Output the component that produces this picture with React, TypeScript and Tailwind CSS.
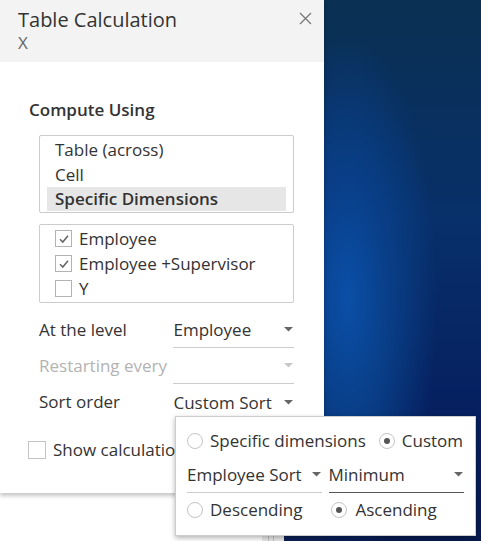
import React from "react";

const font = { fontFamily: "'Open Sans', 'Noto Sans', sans-serif" };

function Caret({ light = false }: { light?: boolean }) {
  return (
    <svg width="9" height="5" viewBox="0 0 9 5" className="shrink-0">
      <path d="M0 0 L9 0 L4.5 4.5 Z" fill={light ? "#c8c8c8" : "#666"} />
    </svg>
  );
}

function Check({ checked }: { checked: boolean }) {
  return (
    <span className="flex h-[17px] w-[17px] shrink-0 items-center justify-center border border-[#b3b3b3] bg-white">
      {checked && (
        <svg width="12" height="10" viewBox="0 0 12 10">
          <path d="M2 5.2 L4.8 8 L10 1.8" fill="none" stroke="#666" strokeWidth="1.6" />
        </svg>
      )}
    </span>
  );
}

function Radio({ checked }: { checked: boolean }) {
  return (
    <span className="flex h-[16px] w-[16px] shrink-0 items-center justify-center rounded-full border border-[#c4c4c4] bg-white">
      {checked && <span className="h-[6px] w-[6px] rounded-full bg-[#555]" />}
    </span>
  );
}

function Field({
  label,
  value,
  disabled = false,
  underline = true,
}: {
  label: string;
  value: string;
  disabled?: boolean;
  underline?: boolean;
}) {
  return (
    <div className="flex h-[36px] items-center">
      <span className={`w-[135px] ${disabled ? "text-[#b3b3b3]" : "text-[#333]"}`}>{label}</span>
      <div
        className={`flex h-[36px] w-[121px] items-center justify-between pr-[1px] ${
          underline ? "border-b border-[#ccc]" : ""
        }`}
      >
        <span className="pt-[1px]">{value}</span>
        <Caret light={disabled} />
      </div>
    </div>
  );
}

export default function App() {
  return (
    <div className="relative flex h-[541px] w-[481px] overflow-hidden bg-white text-[17px] leading-[22px] text-[#333]" style={font}>
      {/* dialog column */}
      <div className="flex w-[324px] flex-col">
        <div className="relative z-10 h-[493px] bg-white shadow-[0_3px_4px_rgba(0,0,0,0.22)]">
          <div className="relative h-[62px] bg-[#f3f3f3] pl-[18px] pt-[8px]">
            <div className="text-[20px] leading-[24px] text-[#333]">Table Calculation</div>
            <div className="text-[17px] leading-[22px] text-[#666]">X</div>
            <svg className="absolute right-[12px] top-[12px]" width="13" height="13" viewBox="0 0 13 13">
              <path d="M1 1 L12 12 M12 1 L1 12" stroke="#777" strokeWidth="1.3" />
            </svg>
          </div>

          <div className="pl-[39px] pr-[30px]">
            <div className="-ml-[10px] pt-[37px] text-[17px] font-semibold leading-[22px] text-[#333]">Compute Using</div>

            <div className="mt-[14px] rounded-[2px] border border-[#ccc] px-[7px] py-[1px]">
              <div className="h-[25px] pl-[8px] leading-[25px]">Table (across)</div>
              <div className="h-[25px] pl-[8px] leading-[25px]">Cell</div>
              <div className="h-[24px] bg-[#e6e6e6] pl-[8px] font-semibold leading-[24px]">Specific Dimensions</div>
            </div>

            <div className="mt-[11px] flex flex-col rounded-[2px] border border-[#ccc] px-[15px] py-[1px]">
              {[
                { t: "Employee", c: true },
                { t: "Employee +Supervisor", c: true },
                { t: "Y", c: false },
              ].map((r) => (
                <div key={r.t} className="flex h-[25px] items-center gap-[7px]">
                  <Check checked={r.c} />
                  <span>{r.t}</span>
                </div>
              ))}
            </div>

            <div className="mt-[9px]">
              <Field label="At the level" value="Employee" />
              <Field label="Restarting every" value="" disabled />
              <Field label="Sort order" value="Custom Sort" underline={false} />
            </div>
          </div>

          <div className="mt-[19px] flex items-center gap-[7px] pl-[28px]">
            <span className="h-[18px] w-[18px] shrink-0 border border-[#c4c4c4] bg-white" />
            <span className="w-[122px] overflow-hidden whitespace-nowrap">Show calculation assistance</span>
          </div>
        </div>
        <div className="flex flex-1 justify-end">
          <div className="mt-auto flex h-[9px] w-[62px] bg-[#e8e8e8]">
            <span className="ml-[6px] w-[1px] bg-[#c0c0c0]" />
            <span className="ml-[4px] w-[1px] bg-[#c0c0c0]" />
            <span className="ml-auto w-[40px] bg-[#0b1f55]" />
          </div>
        </div>
      </div>

      {/* desktop background */}
      <div className="flex-1 bg-[radial-gradient(ellipse_90px_260px_at_15%_55%,#0a4fa8_0%,#093f88_45%,transparent_100%),linear-gradient(180deg,#0a3052_0%,#08306a_40%,#062060_75%,#071a50_100%)]" />

      {/* sort popup */}
      <div className="absolute left-[175px] top-[416px] z-20 w-[301px] border border-[#ccc] bg-white px-[11px] pb-[8px] pt-[8px] shadow-[0_2px_5px_rgba(0,0,0,0.3)]">
        <div className="flex h-[32px] items-center">
          <Radio checked={false} />
          <span className="ml-[7px]">Specific dimensions</span>
          <span className="ml-[13px]"><Radio checked /></span>
          <span className="ml-[7px]">Custom</span>
        </div>
        <div className="flex h-[36px] items-stretch">
          <div className="flex w-[135px] items-center justify-between border-b border-[#ccc] pr-[1px]">
            <span>Employee Sort</span>
            <Caret />
          </div>
          <div className="ml-[7px] flex w-[136px] items-center justify-between border-b border-[#555] pr-[1px]">
            <span>Minimum</span>
            <Caret />
          </div>
        </div>
        <div className="flex h-[34px] items-center">
          <Radio checked={false} />
          <span className="ml-[7px]">Descending</span>
          <span className="ml-[29px]"><Radio checked /></span>
          <span className="ml-[8px]">Ascending</span>
        </div>
      </div>
    </div>
  );
}
